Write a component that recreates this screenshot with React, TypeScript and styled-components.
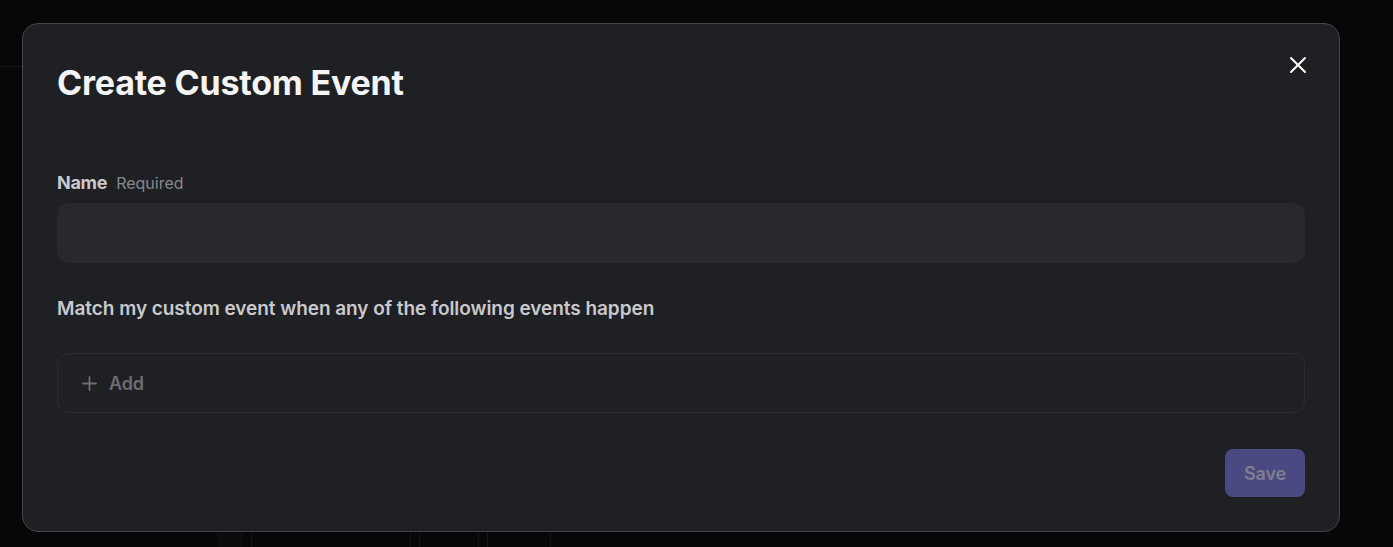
import * as React from 'react'
import styled, { createGlobalStyle } from 'styled-components'

const GlobalStyle = createGlobalStyle`
  html, body {
    margin: 0;
    padding: 0;
    background: #070707;
    font-family: Inter, "Liberation Sans", sans-serif;
    -webkit-font-smoothing: antialiased;
  }
  * {
    box-sizing: border-box;
  }
`

const Backdrop = styled.div`
  position: relative;
  width: 1393px;
  height: 547px;
  overflow: hidden;
  background: #070707;
`

const PageHeader = styled.div`
  width: 217px;
  height: 67px;
  border-bottom: 1px solid #161616;
`

const PageShapes = styled.div`
  display: flex;
  gap: 8px;
  padding: 440px 0 0 217px;
`

const GhostColumn = styled.div`
  width: 26px;
  height: 60px;
  background: #0c0c0c;
`

const GhostCard = styled.div<{ $width: number }>`
  width: ${(p) => p.$width}px;
  height: 60px;
  border: 1px solid #141414;
  border-radius: 10px;
`

const Overlay = styled.div`
  position: absolute;
  inset: 0;
  padding: 23px 0 0 22px;
`

const Modal = styled.div`
  position: relative;
  width: 1318px;
  height: 509px;
  padding: 0 34px;
  background: #1f2024;
  border: 1px solid #44454a;
  border-radius: 16px;
  display: flex;
  flex-direction: column;
`

const Title = styled.h1`
  margin: 38px 0 0;
  font-size: 34px;
  line-height: 42px;
  font-weight: 700;
  color: #f4f4f5;
  letter-spacing: -0.2px;
`

const CloseButton = styled.button`
  position: absolute;
  top: 29px;
  right: 29px;
  width: 24px;
  height: 24px;
  padding: 0;
  border: 0;
  background: transparent;
  display: flex;
  align-items: center;
  justify-content: center;
  cursor: pointer;
`

const LabelRow = styled.div`
  margin-top: 67px;
  display: flex;
  align-items: baseline;
  gap: 9px;
  line-height: 24px;
`

const Label = styled.span`
  font-size: 18px;
  font-weight: 700;
  color: #c9c9cd;
  letter-spacing: -0.3px;
`

const Hint = styled.span`
  font-size: 16px;
  font-weight: 400;
  color: #86878c;
`

const Input = styled.input`
  margin-top: 8px;
  width: 100%;
  height: 60px;
  border: 0;
  border-radius: 12px;
  background: #28292d;
  padding: 0 20px;
  font-size: 16px;
  color: #e4e4e7;
  outline: none;
  font-family: inherit;
`

const SectionText = styled.p`
  margin: 34px 0 0;
  font-size: 19px;
  line-height: 24px;
  font-weight: 600;
  color: #c9c9cd;
  letter-spacing: -0.05px;
`

const AddBox = styled.button`
  margin-top: 32px;
  width: 100%;
  height: 60px;
  border: 1px solid #2b2c31;
  border-radius: 12px;
  background: transparent;
  display: flex;
  align-items: center;
  gap: 12px;
  padding: 0 24px;
  font-family: inherit;
  font-size: 18px;
  font-weight: 600;
  color: #6c6d72;
  letter-spacing: -0.1px;
  cursor: pointer;
`

const Footer = styled.div`
  margin-top: 36px;
  display: flex;
  justify-content: flex-end;
`

const SaveButton = styled.button`
  width: 80px;
  height: 48px;
  border: 0;
  border-radius: 8px;
  background: #4b4981;
  font-family: inherit;
  font-size: 18px;
  font-weight: 600;
  color: #7e7e90;
  letter-spacing: -0.2px;
`

export default function App() {
  return (
    <>
      <GlobalStyle />
      <Backdrop>
        <PageHeader />
        <PageShapes>
          <GhostColumn />
          <GhostCard $width={160} />
          <GhostCard $width={60} />
          <GhostCard $width={64} />
        </PageShapes>
        <Overlay>
          <Modal>
            <Title>Create Custom Event</Title>
            <CloseButton aria-label="Close">
              <svg width="18" height="18" viewBox="0 0 18 18" fill="none">
                <path d="M2 2L16 16M16 2L2 16" stroke="#ffffff" strokeWidth="2" strokeLinecap="round" />
              </svg>
            </CloseButton>
            <LabelRow>
              <Label>Name</Label>
              <Hint>Required</Hint>
            </LabelRow>
            <Input type="text" />
            <SectionText>Match my custom event when any of the following events happen</SectionText>
            <AddBox>
              <svg width="15" height="15" viewBox="0 0 15 15" fill="none">
                <path d="M7.5 1V14M1 7.5H14" stroke="#6c6d72" strokeWidth="1.8" strokeLinecap="round" />
              </svg>
              Add
            </AddBox>
            <Footer>
              <SaveButton>Save</SaveButton>
            </Footer>
          </Modal>
        </Overlay>
      </Backdrop>
    </>
  )
}
